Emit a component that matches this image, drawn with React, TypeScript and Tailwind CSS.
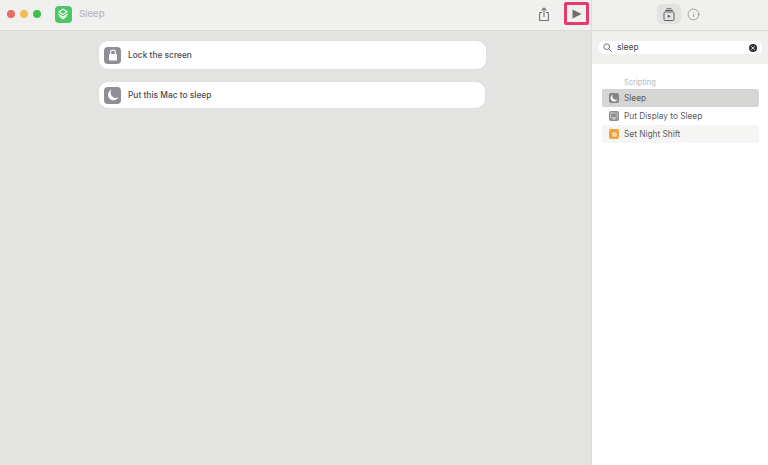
import { Info, Monitor, X } from 'lucide-react'

function MoonGlyph({ size }: { size: number }) {
  return (
    <svg width={size} height={size} viewBox="0 0 12 12">
      <path d="M4.6 .8A5.4 5.4 0 1 0 11.4 7.9 5 5 0 0 1 4.6 .8Z" fill="white" />
    </svg>
  )
}

function ActionCard({ label, icon, className }: { label: string; icon: React.ReactNode; className: string }) {
  return (
    <div className={`flex items-center gap-[7px] bg-white rounded-[9px] pl-[5px] shadow-[0_0_2px_rgba(0,0,0,0.06)] ${className}`}>
      <div className="w-[17px] h-[17px] rounded-[4px] bg-[#8f8e94] flex items-center justify-center">{icon}</div>
      <span className="text-[8.4px] font-medium text-[#4a4a4c]">{label}</span>
    </div>
  )
}

function ResultRow({ label, icon, className }: { label: string; icon: React.ReactNode; className: string }) {
  return (
    <div className={`h-[18px] rounded-[2px] flex items-center gap-[5px] pl-[7px] ${className}`}>
      {icon}
      <span className="text-[8.3px] text-[#5c5c5e]">{label}</span>
    </div>
  )
}

export default function App() {
  return (
    <div className="w-[768px] h-[465px] overflow-hidden flex bg-[#e3e3e1] font-['Inter',sans-serif]">
      <div className="w-[591px] flex flex-col">
        <div className="h-[31px] bg-[#f0f0ee] border-b border-[#d9d9d7] flex items-center pl-[7px] pb-[2px]">
          <div className="flex gap-[4.8px]">
            <div className="w-[8px] h-[8px] rounded-full bg-[#ee6a5f]" />
            <div className="w-[8px] h-[8px] rounded-full bg-[#f5bd4f]" />
            <div className="w-[8px] h-[8px] rounded-full bg-[#3fc04d]" />
          </div>
          <div className="ml-[14.4px] w-[17px] h-[17px] rounded-[4px] bg-[#4bc865] flex items-center justify-center">
            <svg width="12" height="12" viewBox="0 0 12 12" fill="none" stroke="white" strokeWidth="1.2" strokeLinejoin="round" strokeLinecap="round">
              <path d="M6 1.2 10.2 3.8 6 6.4 1.8 3.8Z" />
              <path d="M1.8 6.4 6 9 10.2 6.4" />
              <path d="M3 8.6 6 10.8 9 8.6" />
            </svg>
          </div>
          <span className="ml-[7px] w-[30px] text-[9.5px] font-medium text-[#b9b9b8]">Sleep</span>
          <svg className="ml-[429px]" width="12" height="15" viewBox="0 0 12 15" fill="none" stroke="#777" strokeWidth="1.1" strokeLinecap="round" strokeLinejoin="round">
            <path d="M3.8 5.5H1.6v8h8.8v-8H8.2" />
            <path d="M6 9.5V1M3.8 3.2 6 1l2.2 2.2" />
          </svg>
          <div className="ml-[14px] mb-[1px] w-[25px] h-[23px] border-[3px] border-[#e5396f] rounded-[2px] flex items-center justify-center">
            <svg className="ml-[2px]" width="10" height="10" viewBox="0 0 10 10">
              <path d="M.5 .5 9.5 5 .5 9.5Z" fill="#6f6f6f" />
            </svg>
          </div>
        </div>
        <div className="flex-1 pl-[99px] pt-[10px] flex flex-col">
          <ActionCard className="w-[387px] h-[28px]" label="Lock the screen" icon={
            <svg width="10" height="12" viewBox="0 0 10 12" fill="none">
              <path d="M2.6 5V3.4a2.4 2.4 0 0 1 4.8 0V5" stroke="white" strokeWidth="1.1" />
              <rect x="1" y="5" width="8" height="6.4" rx="1" fill="white" />
            </svg>
          } />
          <ActionCard className="w-[386px] h-[26px] mt-[13px]" label="Put this Mac to sleep" icon={<MoonGlyph size={12} />} />
        </div>
      </div>
      <div className="w-[177px] flex flex-col bg-white border-l border-[#dcdcda]">
        <div className="h-[31px] bg-[#f0f0ee] border-b border-[#d9d9d7] flex items-center pl-[65px]">
          <div className="w-[24px] h-[20px] mb-[2px] rounded-[5px] bg-[#e2e2e0] flex items-center justify-center">
            <svg width="12" height="13" viewBox="0 0 12 13" fill="none" stroke="#5e5e5e" strokeWidth="1">
              <rect x="1" y="4" width="10" height="8.5" rx="1.2" />
              <path d="M2.2 2.5h7.6M3.4 .8h5.2" />
              <path d="M4.8 6.4 7.8 8.2 4.8 10Z" fill="#5e5e5e" stroke="none" />
            </svg>
          </div>
          <Info className="ml-[5.5px] mb-[2px] w-[13px] h-[13px] text-[#6c6c6c]" strokeWidth={1.1} />
        </div>
        <div className="h-[33px] bg-[#f0f0ee] flex items-center pl-[7px]">
          <div className="w-[163px] h-[13px] bg-white rounded-[5px] flex items-center pl-[4px] pr-[5px]">
            <svg width="9" height="9" viewBox="0 0 9 9" fill="none" stroke="#666" strokeWidth="0.9" strokeLinecap="round">
              <circle cx="3.7" cy="3.7" r="2.9" />
              <path d="M5.9 5.9 8.4 8.4" />
            </svg>
            <span className="ml-[5px] text-[8.5px] text-[#444]">sleep</span>
            <div className="ml-auto w-[8px] h-[8px] rounded-full bg-[#333] flex items-center justify-center">
              <X className="w-[6px] h-[6px] text-white" strokeWidth={3} />
            </div>
          </div>
        </div>
        <div className="flex-1 pl-[10px] pr-[9px] pt-[14px]">
          <div className="pl-[22px] h-[10px] text-[7.4px] leading-[10px] text-[#c2c2c2] font-medium">Scripting</div>
          <div className="mt-[1px]">
            <ResultRow className="bg-[#d5d5d4]" label="Sleep" icon={
              <div className="w-[10px] h-[10px] rounded-[2px] bg-[#858588] flex items-center justify-center">
                <MoonGlyph size={8} />
              </div>
            } />
            <ResultRow className="bg-white" label="Put Display to Sleep" icon={
              <div className="w-[10px] h-[10px] rounded-[2px] bg-[#8f8f92] flex items-center justify-center">
                <Monitor className="w-[8px] h-[8px] text-white" strokeWidth={1.5} />
              </div>
            } />
            <ResultRow className="bg-[#f5f6f4]" label="Set Night Shift" icon={
              <div className="w-[10px] h-[10px] rounded-[2px] bg-[#f2a13b] flex items-center justify-center">
                <div className="w-[5px] h-[5px] rounded-full bg-[#fbd9a8]" />
              </div>
            } />
          </div>
        </div>
      </div>
    </div>
  )
}
